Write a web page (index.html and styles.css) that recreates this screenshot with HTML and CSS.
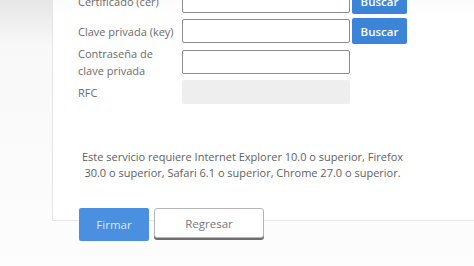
FILE: index.html
```html
<!DOCTYPE html>
<html lang="es">
<head>
    <meta charset="UTF-8">
    <meta name="viewport" content="width=device-width, initial-scale=1.0">
    <title>Firma</title>
    <link rel="stylesheet" href="styles.css">
</head>
<body>
    <div class="panel">
        <div class="form">
            <div class="row">
                <label class="label">Certificado (cer)</label>
                <input class="field" type="text">
                <button class="btn-buscar">Buscar</button>
            </div>
            <div class="row">
                <label class="label">Clave privada (key)</label>
                <input class="field" type="text">
                <button class="btn-buscar">Buscar</button>
            </div>
            <div class="row row-tall">
                <label class="label">Contraseña de<br>clave privada</label>
                <input class="field" type="password">
            </div>
            <div class="row row-short">
                <label class="label">RFC</label>
                <input class="field field-disabled" type="text" disabled>
            </div>
            <p class="info">Este servicio requiere Internet Explorer 10.0 o superior, Firefox 30.0 o superior, Safari 6.1 o superior, Chrome 27.0 o superior.</p>
        </div>
    </div>
    <div class="actions">
        <button class="btn-firmar">Firmar</button>
        <button class="btn-regresar">Regresar</button>
    </div>
</body>
</html>
```

FILE: styles.css
```css
body {
    margin: 0;
    height: 266px;
    overflow: hidden;
    background: linear-gradient(#e6e6e6, #f8f8f8 45px, #fdfdfd);
    font-family: "Open Sans", Arial, sans-serif;
    color: #666;
}

.panel {
    margin-left: 52px;
    margin-top: -14px;
    border-left: 1px solid #e6e6e6;
    border-bottom: 1px solid #e6e6e6;
    background: linear-gradient(#f8f8f8, #ffffff 30px);
    padding-bottom: 39px;
}

.form {
    width: 329px;
    margin-left: 25px;
}

.row {
    display: flex;
    align-items: center;
    height: 30px;
}

.row-tall {
    height: 32px;
}

.row-short {
    height: 28px;
}

.label {
    width: 104px;
    font-size: 11px;
    line-height: 17px;
    color: #6b6b6b;
}

.field {
    box-sizing: border-box;
    width: 168px;
    height: 24px;
    margin: 0;
    border: 1.5px solid #8c8c8c;
    border-radius: 2px;
    background: #fff;
}

.field-disabled {
    border: none;
    background: #eeeeee;
}

.btn-buscar {
    box-sizing: border-box;
    width: 55px;
    height: 26px;
    margin-left: 2px;
    border: none;
    border-radius: 2px;
    background: #3b84d8;
    color: #fff;
    font-family: "Open Sans", Arial, sans-serif;
    font-size: 11.5px;
    font-weight: 600;
}

.info {
    margin: 43px 0 0;
    text-align: center;
    font-size: 11px;
    line-height: 16px;
    color: #5f5f5f;
}

.actions {
    display: flex;
    gap: 5px;
    margin-top: -13px;
    padding-left: 79px;
}

.btn-firmar {
    width: 70px;
    height: 33px;
    border: none;
    border-radius: 2px;
    background: #4a8fe0;
    color: #dfeaf8;
    font-family: "Open Sans", Arial, sans-serif;
    font-size: 11.5px;
}

.btn-regresar {
    width: 110px;
    height: 30px;
    border: 1px solid #b5b5b5;
    border-radius: 3px;
    background: #fff;
    box-shadow: 0 2px 0 #6f6f6f;
    color: #777;
    font-family: "Open Sans", Arial, sans-serif;
    font-size: 11.5px;
}
```
